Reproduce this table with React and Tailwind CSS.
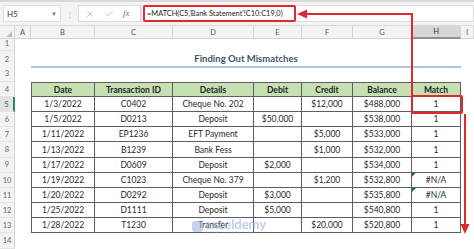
import { X, Check } from 'lucide-react'

const cols = 'grid grid-cols-[15px_16px_64px_78px_81px_48px_51px_59px_49px_1fr]'
const letters = ['A', 'B', 'C', 'D', 'E', 'F', 'G', 'H', 'I']
const heads = ['Date', 'Transaction ID', 'Details', 'Debit', 'Credit', 'Balance', 'Match']

const data = [
  ['1/3/2022', 'C0402', 'Cheque No. 202', '', '$12,000', '$488,000', '1'],
  ['1/5/2022', 'D0213', 'Deposit', '$50,000', '', '$538,000', '1'],
  ['1/11/2022', 'EP1236', 'EFT Payment', '', '$5,000', '$533,000', '1'],
  ['1/13/2022', 'B1239', 'Bank Fess', '', '$1,000', '$532,000', '1'],
  ['1/17/2022', 'D0609', 'Deposit', '$2,000', '', '$534,000', '1'],
  ['1/19/2022', 'C1023', 'Cheque No. 379', '', '$1,200', '$532,800', '#N/A'],
  ['1/20/2022', 'D0292', 'Deposit', '$3,000', '', '$535,800', '#N/A'],
  ['1/25/2022', 'D1111', 'Deposit', '$5,000', '', '$540,800', '1'],
  ['1/28/2022', 'T1230', 'Transfer', '', '$20,000', '$520,800', '1'],
]

function RowHead({ n }) {
  const active = n === 5
  return (
    <div
      className={
        'flex items-center justify-center border-b border-[#e3e3e3] pt-[1px] text-[7.5px] ' +
        (active
          ? 'bg-[#e2e2e2] text-[#217346] border-r-2 border-r-[#2e8b57]'
          : 'bg-[#f3f3f3] text-[#666] border-r border-r-[#d4d4d4]')
      }
    >
      {n}
    </div>
  )
}

function Cell({ children, first, top, head, flag }) {
  return (
    <div
      className={
        'relative flex items-center justify-center whitespace-nowrap pt-[1px] border-r border-b border-[#5e5e5e] ' +
        (first ? 'border-l ' : '') +
        (top ? 'border-t ' : '') +
        (head ? 'bg-[#c6e0b4] font-bold text-[#1f1f1f]' : 'bg-white text-[#2a2a2a]')
      }
    >
      {flag && <div className="absolute top-0 left-0 w-[4px] h-[4px] bg-[#1d6b3f] [clip-path:polygon(0_0,100%_0,0_100%)]" />}
      {children}
    </div>
  )
}

export default function App() {
  const rows = []
  for (let n = 1; n <= 14; n++) {
    let content = null
    if (n === 2) {
      content = (
        <div className="col-start-3 col-span-7 flex items-center justify-center border-b-2 border-[#adc7e3] pt-[1px] text-[9.5px] font-bold text-[#44546a]">
          Finding Out Mismatches
        </div>
      )
    } else if (n === 4) {
      content = heads.map((h, i) => (
        <Cell key={h} first={i === 0} top head>
          {h}
        </Cell>
      ))
    } else if (n >= 5 && n <= 13) {
      content = data[n - 5].map((v, i) => (
        <Cell key={i} first={i === 0} flag={i === 6 && v === '#N/A'}>
          {v}
        </Cell>
      ))
    }
    rows.push(
      <div key={n} className={cols + ' h-[15.2px] text-[8.5px]'}>
        <RowHead n={n} />
        <div />
        {content}
      </div>
    )
  }

  return (
    <div className="relative w-[474px] h-[249px] overflow-hidden bg-white font-['Lato',sans-serif]">
      <div className="h-[2px] bg-[#d9d9d9]" />
      {/* formula bar */}
      <div className="flex h-[24px] items-center bg-[#f3f3f3] border-b border-[#dadada]">
        <div className="ml-[3px] flex h-[17px] w-[58px] items-center justify-between border border-[#dcdcdc] bg-white px-[3px] text-[8px] text-[#333]">
          <span>H5</span>
          <span className="text-[6px] text-[#777]">▼</span>
        </div>
        <div className="w-[17px] text-center text-[8px] leading-none text-[#b0b0b0]">⋮</div>
        <div className="flex h-[17px] w-[63px] items-center gap-[9px] border border-[#dcdcdc] bg-white pl-[6px] text-[#a5a5a5]">
          <X size={10} strokeWidth={1.5} />
          <Check size={10} strokeWidth={1.5} />
          <span className="font-['Liberation_Serif',serif] text-[9px] italic text-[#777]">fx</span>
        </div>
        <div className="flex h-[17px] flex-1 items-center border border-[#dcdcdc] bg-white">
          <span className="ml-[1px] flex h-[17px] w-[153px] items-center rounded-[2px] border-2 border-[#dc2a2f] px-[2px] text-[7.4px] whitespace-nowrap text-[#222]">
            =MATCH(C5,'Bank Statement'!C10:C19,0)
          </span>
        </div>
      </div>
      {/* column headers */}
      <div className={cols + ' h-[10px] text-[7.5px] text-[#555]'}>
        <div className="relative bg-[#f3f3f3] border-r border-b border-[#d4d4d4]">
          <div className="absolute right-[2px] bottom-[1px] w-[6px] h-[6px] bg-[#bdbdbd] [clip-path:polygon(100%_0,100%_100%,0_100%)]" />
        </div>
        {letters.map((l) => (
          <div
            key={l}
            className={
              'flex items-center justify-center border-r border-[#d4d4d4] ' +
              (l === 'H'
                ? 'bg-[#d6d6d6] border-b-2 border-b-[#8f8f8f] text-[#333]'
                : 'bg-[#f3f3f3] border-b border-b-[#d4d4d4]')
            }
          >
            {l}
          </div>
        ))}
      </div>
      {rows}

      {/* watermark */}
      <div className="pointer-events-none absolute left-[192px] top-[218px] flex items-center gap-[2px] opacity-60">
        <div className="h-[11px] w-[11px] rounded-[3px] bg-[#9db7d9]" />
        <div className="flex flex-col leading-none">
          <span className="text-[13px] font-semibold text-[#8eaad3]">exceldemy</span>
          <span className="text-[4px] tracking-[1px] text-[#a9b9cc]">EXCEL · DATA · BI</span>
        </div>
      </div>

      {/* red annotations */}
      <svg className="pointer-events-none absolute inset-0" width="474" height="249">
        <g stroke="#dc2a2f" strokeWidth="2" fill="none">
          <path d="M304 14 H412 V96" />
          <rect x="412" y="96" width="50" height="17" rx="1" />
          <path d="M465 114 V226" />
        </g>
        <g fill="#dc2a2f">
          <polygon points="297,14 307,9.5 307,18.5" />
          <polygon points="460.5,224 469.5,224 465,234" />
        </g>
      </svg>
    </div>
  )
}
